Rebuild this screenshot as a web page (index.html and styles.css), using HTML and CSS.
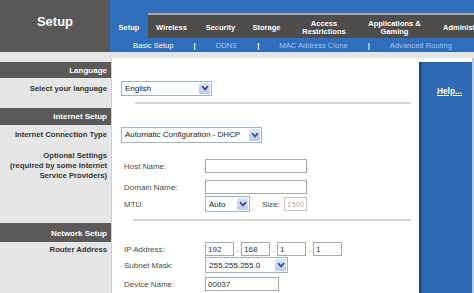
FILE: index.html
```html
<!DOCTYPE html>
<html lang="en">
<head>
    <meta charset="UTF-8">
    <title>Setup</title>
    <link rel="stylesheet" href="styles.css">
</head>
<body>
<div class="page">
    <div class="header">
        <div class="brand">Setup</div>
        <div class="nav">
            <div class="tabs">
                <a class="tab active t-setup">Setup</a>
                <a class="tab t-wireless">Wireless</a>
                <a class="tab t-security">Security</a>
                <a class="tab t-storage">Storage</a>
                <a class="tab t-access">Access<br>Restrictions</a>
                <a class="tab t-apps">Applications &amp;<br>Gaming</a>
                <a class="tab t-admin">Administration</a>
            </div>
            <div class="subtabs">
                <a class="current">Basic Setup</a>
                <span class="sep">|</span>
                <a>DDNS</a>
                <span class="sep">|</span>
                <a>MAC Address Clone</a>
                <span class="sep">|</span>
                <a>Advanced Routing</a>
            </div>
        </div>
    </div>

    <div class="setup-grid">
        <div class="help"><a href="#">Help...</a></div>
        <div class="edge"></div>

        <div class="side"></div>
        <div class="main"></div>

        <div class="side head">Language</div>
        <div class="main"></div>

        <div class="side">Select your language</div>
        <div class="main pad-select">
            <div class="select w-lang"><span>English</span><i class="arrow"><svg width="8" height="6" viewBox="0 0 8 6"><path d="M1 1.2 L4 4.4 L7 1.2" fill="none" stroke="#3b5186" stroke-width="1.8"/></svg></i></div>
        </div>

        <div class="side"></div>
        <div class="main"><hr class="rule rule-lang"></div>

        <div class="side head">Internet Setup</div>
        <div class="main"></div>

        <div class="side">Internet Connection Type</div>
        <div class="main pad-select">
            <div class="select w-wan"><span>Automatic Configuration - DHCP</span><i class="arrow"><svg width="8" height="6" viewBox="0 0 8 6"><path d="M1 1.2 L4 4.4 L7 1.2" fill="none" stroke="#3b5186" stroke-width="1.8"/></svg></i></div>
        </div>

        <div class="side multi">Optional Settings<br>(required by some Internet<br>Service Providers)</div>
        <div class="main fields">
            <div class="field f-host">
                <label>Host Name:</label>
                <input class="text w-wide" type="text" value="">
            </div>
            <div class="field f-domain">
                <label>Domain Name:</label>
                <input class="text w-wide" type="text" value="">
            </div>
            <div class="field f-mtu">
                <label>MTU:</label>
                <div class="select w-mtu"><span>Auto</span><i class="arrow"><svg width="8" height="6" viewBox="0 0 8 6"><path d="M1 1.2 L4 4.4 L7 1.2" fill="none" stroke="#3b5186" stroke-width="1.8"/></svg></i></div>
                <span class="size-label">Size:</span>
                <input class="text w-size" type="text" value="1500" disabled>
            </div>
            <hr class="rule rule-opt">
        </div>

        <div class="side head head-net">Network Setup</div>
        <div class="main"></div>

        <div class="side top">Router Address</div>
        <div class="main fields">
            <div class="field f-ip">
                <label>IP Address:</label>
                <input class="text w-ip" type="text" value="192">
                <span class="dot">.</span>
                <input class="text w-ip" type="text" value="168">
                <span class="dot">.</span>
                <input class="text w-ip" type="text" value="1">
                <span class="dot">.</span>
                <input class="text w-ip" type="text" value="1">
            </div>
            <div class="field f-mask">
                <label>Subnet Mask:</label>
                <div class="select w-mask"><span>255.255.255.0</span><i class="arrow"><svg width="8" height="6" viewBox="0 0 8 6"><path d="M1 1.2 L4 4.4 L7 1.2" fill="none" stroke="#3b5186" stroke-width="1.8"/></svg></i></div>
            </div>
            <div class="field f-device">
                <label>Device Name:</label>
                <input class="text w-device" type="text" value="00037">
            </div>
        </div>
    </div>
</div>
</body>
</html>
```

FILE: styles.css
```css
body {
    margin: 0;
    font-family: "Liberation Sans", Arial, sans-serif;
    background: #e6e6e6;
    overflow: hidden;
}

.page {
    width: 474px;
    height: 293px;
    overflow: hidden;
}

/* header */

.header {
    display: flex;
    height: 52px;
}

.brand {
    width: 110px;
    flex: none;
    box-sizing: border-box;
    padding-bottom: 10px;
    display: flex;
    align-items: center;
    justify-content: center;
    background: #595857;
    color: #fff;
    font-size: 13px;
    font-weight: bold;
}

.nav {
    flex: 1;
    min-width: 0;
    padding-top: 13px;
    background: #2f6dbd;
}

.tabs {
    display: flex;
    height: 25px;
    white-space: nowrap;
}

.tab {
    flex: none;
    box-sizing: border-box;
    display: flex;
    align-items: center;
    justify-content: center;
    padding-top: 3px;
    text-align: center;
    background: #4e4d4b;
    border-top: 2px solid #a9a9a9;
    color: #fff;
    font-size: 7.5px;
    font-weight: bold;
    line-height: 8.5px;
}

.tab.active {
    background: #2f6dbd;
    border-top-color: #2f6dbd;
}

.t-setup { width: 38px; }
.t-wireless { width: 47px; }
.t-security { width: 51px; }
.t-storage { width: 41px; }
.t-access { width: 74px; }
.t-apps { width: 67px; }
.t-admin { width: 83px; }

.subtabs {
    display: flex;
    align-items: center;
    gap: 20px;
    height: 14px;
    padding-left: 23px;
    color: #9fc3ef;
    font-size: 7.6px;
    white-space: nowrap;
}

.subtabs .current {
    color: #fff;
}

.subtabs .sep {
    color: #fff;
    font-weight: bold;
}

/* body grid */

.setup-grid {
    display: grid;
    grid-template-columns: 111px 308px 53px 2px;
    grid-template-rows: 4px 16px 20px 10px 17px 19px 79px 19px 60px;
    margin-top: 6px;
    background: #fff;
}

.help {
    grid-column: 3;
    grid-row: 2 / -1;
    padding: 18px 0 0 18px;
    background: #2f6ab5;
    box-shadow: inset 3px 0 3px -1px rgba(0, 0, 0, 0.45);
}

.help a {
    color: #fff;
    font-size: 8.3px;
    font-weight: bold;
}

.edge {
    grid-column: 4;
    grid-row: 1 / -1;
    background: #b5cbe4;
}

.side {
    grid-column: 1;
    box-sizing: border-box;
    display: flex;
    align-items: center;
    justify-content: flex-end;
    padding-right: 4px;
    background: #e6e6e6;
    color: #333;
    font-size: 7.7px;
    font-weight: bold;
    text-align: right;
    white-space: nowrap;
}

.side.head {
    background: #5b5a58;
    color: #fff;
    font-size: 8px;
}

.side.head-net {
    padding-top: 2px;
}

.side.multi {
    align-items: flex-start;
    padding-top: 7px;
    line-height: 10px;
}

.side.top {
    align-items: flex-start;
    padding-top: 3px;
    line-height: 10px;
}

.main {
    grid-column: 2;
    border-left: 1px solid #cfcfcf;
    color: #4a4a4a;
    font-size: 8px;
}

.pad-select {
    display: flex;
    align-items: center;
    padding-left: 9px;
}

.rule {
    height: 2px;
    margin: 0 8px 0 0;
    border: none;
    background: #d5d5d5;
}

.rule-lang {
    margin-top: 4px;
    margin-left: 23px;
}

.rule-opt {
    margin-top: 7px;
    margin-left: 9px;
}

/* form controls */

.select {
    box-sizing: border-box;
    display: flex;
    align-items: stretch;
    height: 15px;
    padding: 1px 1px 1px 3px;
    border: 1px solid #a3b3c8;
    background: #fff;
    color: #222;
    font-size: 8px;
}

.select span {
    flex: 1;
    display: flex;
    align-items: center;
    white-space: nowrap;
    overflow: hidden;
}

.select .arrow {
    width: 11px;
    display: flex;
    align-items: center;
    justify-content: center;
    border-radius: 1px;
    background: linear-gradient(#dbe6fd, #b8cbf4);
}

.w-lang { width: 91px; }
.w-wan { width: 141px; height: 16px; }
.w-mtu { width: 45px; height: 16px; }
.w-mask { width: 83px; height: 16px; }

.fields {
    padding-left: 12px;
}

.field {
    display: flex;
    align-items: center;
}

.field label {
    width: 81px;
    flex: none;
}

.text {
    box-sizing: border-box;
    height: 14px;
    margin: 0;
    padding: 0 2px;
    border: 1px solid #a9a9a9;
    background: #fff;
    color: #333;
    font-family: "Liberation Sans", Arial, sans-serif;
    font-size: 8px;
    outline: none;
}

.text:disabled {
    border-color: #c4c4c4;
    color: #b0b0b0;
}

.w-wide { width: 102px; }
.w-size { width: 23px; }
.w-ip { width: 29px; }
.w-device { width: 74px; }

.size-label {
    margin: 0 4px 0 12px;
}

.dot {
    width: 7px;
    text-align: center;
}

.f-host { margin-top: 15px; height: 14px; }
.f-domain { margin-top: 7px; height: 14px; }
.f-mtu { margin-top: 2px; height: 16px; }
.f-ip { height: 14px; }
.f-mask { margin-top: 1px; height: 16px; }
.f-device { margin-top: 4px; height: 14px; }
```
